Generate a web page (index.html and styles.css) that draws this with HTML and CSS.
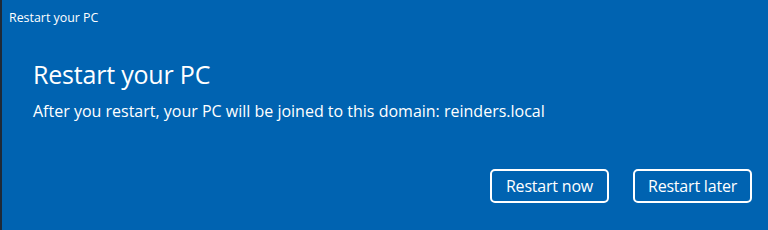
FILE: index.html
```html
<!DOCTYPE html>
<html lang="en">
<head>
    <meta charset="UTF-8">
    <meta name="viewport" content="width=device-width, initial-scale=1.0">
    <link rel="stylesheet" href="styles.css">
</head>
<body>
    <div class="window">
        <div class="titlebar">Restart your PC</div>
        <div class="content">
            <div class="heading">Restart your PC</div>
            <div class="message">After you restart, your PC will be joined to this domain: reinders.local</div>
        </div>
        <div class="actions">
            <button class="btn">Restart now</button>
            <button class="btn">Restart later</button>
        </div>
    </div>
</body>
</html>
```

FILE: styles.css
```css
html, body {
    margin: 0;
    height: 100%;
}

body {
    background-color: #0063b1;
    font-family: "Open Sans", "Noto Sans", sans-serif;
    color: #fff;
}

.window {
    height: 230px;
    box-sizing: border-box;
    border-left: 2px solid #1e2a38;
    display: flex;
    flex-direction: column;
}

.titlebar {
    font-size: 12.4px;
    padding: 9px 0 0 7px;
    height: 21px;
}

.content {
    padding: 27px 0 0 31px;
}

.heading {
    font-size: 25px;
    letter-spacing: -0.2px;
    line-height: 34px;
}

.message {
    font-size: 16px;
    margin-top: 9px;
}

.actions {
    display: flex;
    justify-content: flex-end;
    gap: 24px;
    padding: 0 16px 0 0;
    margin-top: 47px;
}

.btn {
    font-family: inherit;
    font-size: 16px;
    letter-spacing: -0.2px;
    color: #fff;
    background: transparent;
    border: 2px solid #fff;
    border-radius: 5px;
    width: 119px;
    height: 34px;
    padding: 0;
}
```
